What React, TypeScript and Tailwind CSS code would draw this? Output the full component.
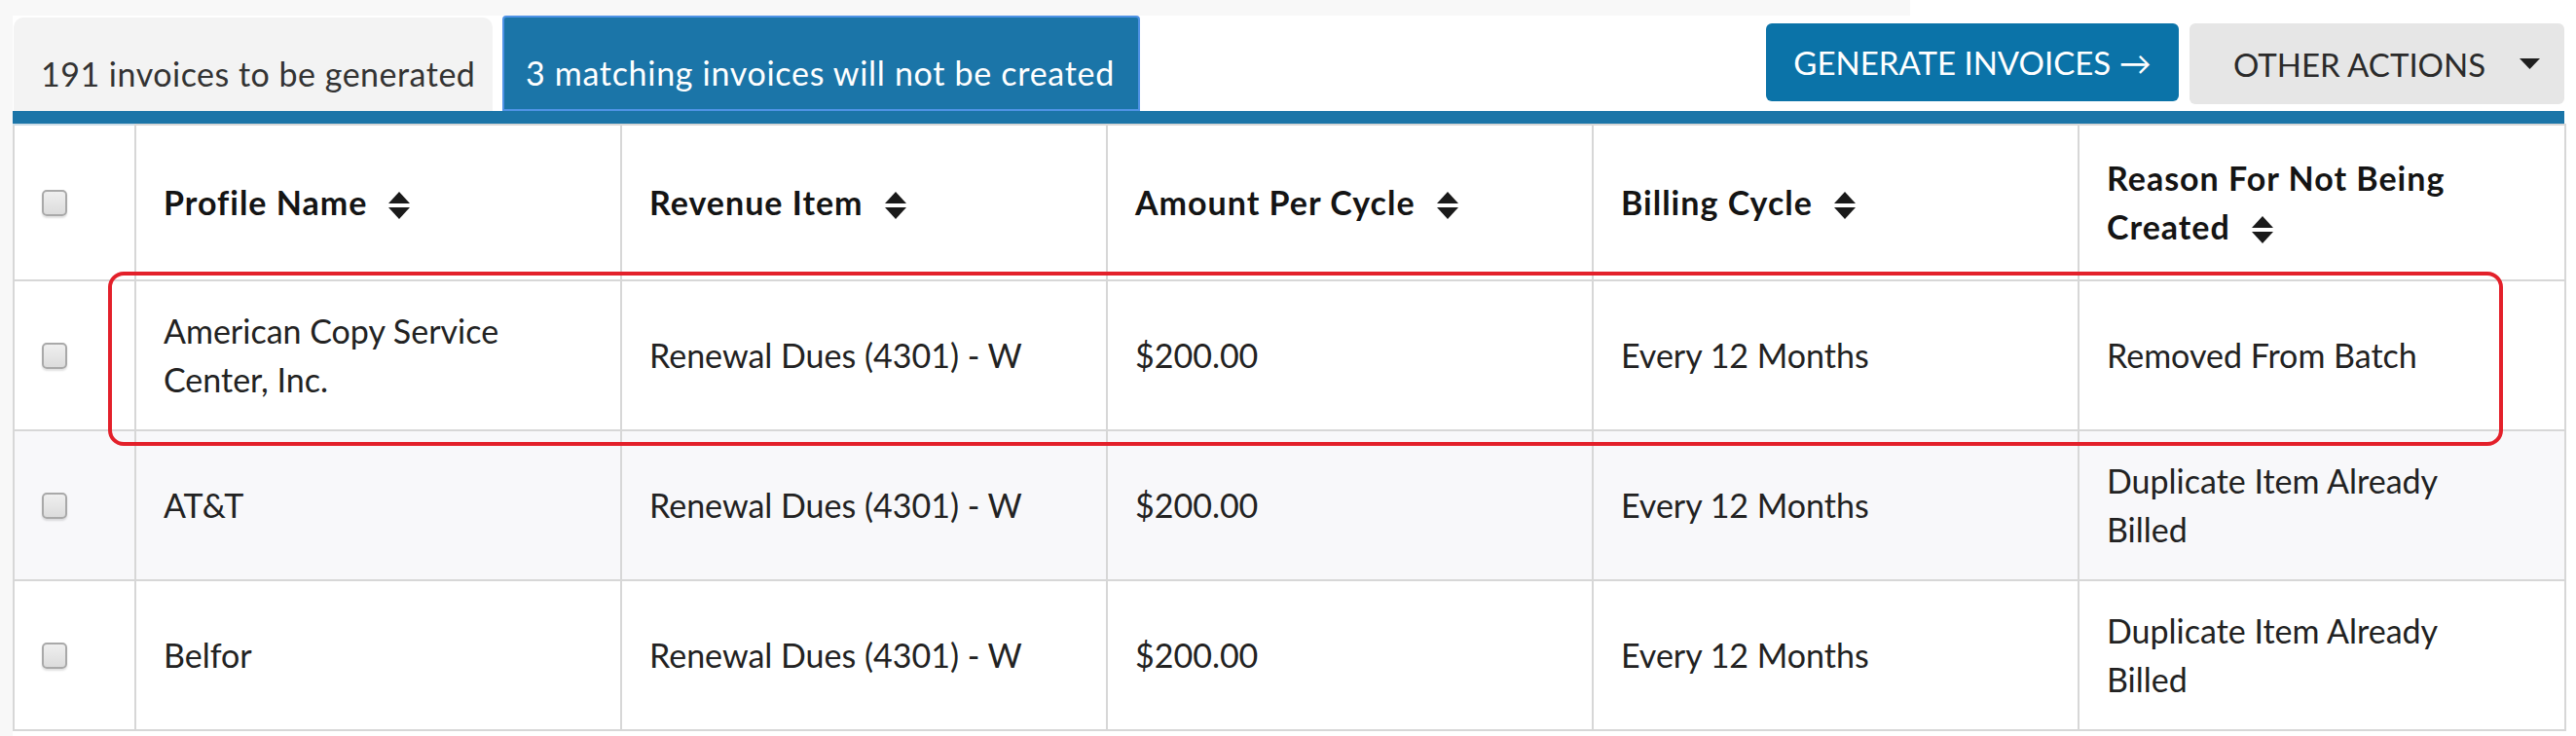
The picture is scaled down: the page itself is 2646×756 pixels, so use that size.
import React from "react";

type Row = {
  name: string;
  item: string;
  amount: string;
  cycle: string;
  reason: string;
  striped?: boolean;
};

const rows: Row[] = [
  {
    name: "American Copy Service Center, Inc.",
    item: "Renewal Dues (4301) - W",
    amount: "$200.00",
    cycle: "Every 12 Months",
    reason: "Removed From Batch",
  },
  {
    name: "AT&T",
    item: "Renewal Dues (4301) - W",
    amount: "$200.00",
    cycle: "Every 12 Months",
    reason: "Duplicate Item Already Billed",
    striped: true,
  },
  {
    name: "Belfor",
    item: "Renewal Dues (4301) - W",
    amount: "$200.00",
    cycle: "Every 12 Months",
    reason: "Duplicate Item Already Billed",
  },
];

function SortIcon() {
  return (
    <svg
      className="ml-[22px] inline-block h-[28px] w-[22px] align-[-4px]"
      viewBox="0 0 22 28"
      fill="#1a1a1a"
    >
      <polygon points="11,0 22,12 0,12" />
      <polygon points="0,16 22,16 11,28" />
    </svg>
  );
}

function Checkbox() {
  return (
    <span className="block h-[27px] w-[26px] rounded-[5px] border-2 border-[#a9a9a9] bg-gradient-to-b from-[#efefef] to-[#dcdcdc] shadow-[0_2px_2px_rgba(0,0,0,0.12)]" />
  );
}

function HeaderCell({ label, last }: { label: string; last?: boolean }) {
  return (
    <th
      className={
        last
          ? "border-2 border-[#d7d7d7] pl-[28px] pr-[40px] text-left align-middle font-bold tracking-[1px] text-[#141414]"
          : "border-2 border-[#d7d7d7] px-[28px] text-left align-middle font-bold tracking-[1px] text-[#141414]"
      }
    >
      {label}
      <SortIcon />
    </th>
  );
}

export default function App() {
  return (
    <div className="relative flex h-[756px] w-[2646px] bg-white font-['Lato','Open_Sans',sans-serif] text-[34px] leading-[50px] text-[#222]">
      <div className="w-[13px] shrink-0 bg-[#f8f8f8]" />

      <div className="flex w-[2621px] flex-col">
        {/* Tabs + actions */}
        <div className="h-[16px] w-[1949px] bg-[#f8f8f8]" />
        <div className="flex h-[98px] items-start justify-between">
          <div className="flex h-full items-end tracking-[0.5px]">
            <div className="ml-[1px] h-[96px] w-[492px] rounded-t-[10px] bg-[#f3f3f3] pl-[28px] pt-[33px] text-[#333]">
              191 invoices to be generated
            </div>
            <div className="ml-[10px] h-[98px] w-[655px] rounded-t-[4px] border-2 border-[#4f93e6] bg-[#1b75a8] pl-[22px] pt-[32px] tracking-[0.7px] text-white">
              3 matching invoices will not be created
            </div>
          </div>
          <div className="mt-[8px] flex gap-[11px]">
            <button className="flex h-[80px] w-[424px] items-center justify-center rounded-[6px] bg-[#0b73a8] text-[33px] text-white">
              GENERATE INVOICES →
            </button>
            <button className="flex h-[83px] w-[385px] items-center rounded-[6px] bg-[#e6e6e6] pl-[45px] text-[33px] text-[#2b2b2b]">
              OTHER ACTIONS
              <svg className="ml-[35px] h-[11px] w-[21px]" viewBox="0 0 21 11" fill="#1f1f1f">
                <polygon points="0,0 21,0 10.5,11" />
              </svg>
            </button>
          </div>
        </div>
        <div className="h-[13px] bg-[#1b75a8]" />

        {/* Table */}
        <table className="w-[2621px] table-fixed border-collapse">
          <colgroup>
            <col className="w-[125px]" />
            <col className="w-[499px]" />
            <col className="w-[499px]" />
            <col className="w-[499px]" />
            <col className="w-[499px]" />
            <col className="w-[500px]" />
          </colgroup>
          <thead>
            <tr className="h-[160px] bg-white">
              <th className="border-2 border-t-[#cddde7] border-[#d7d7d7] pl-[28px] align-middle">
                <Checkbox />
              </th>
              <HeaderCell label="Profile Name" />
              <HeaderCell label="Revenue Item" />
              <HeaderCell label="Amount Per Cycle" />
              <HeaderCell label="Billing Cycle" />
              <HeaderCell label="Reason For Not Being Created" last />
            </tr>
          </thead>
          <tbody>
            {rows.map((r) => (
              <tr
                key={r.name}
                className={r.striped ? "h-[154px] bg-[#f8f8fa]" : "h-[154px] bg-white"}
              >
                <td className="border-2 border-[#d7d7d7] pl-[28px] align-middle">
                  <Checkbox />
                </td>
                <td className="border-2 border-[#d7d7d7] px-[28px] align-middle">{r.name}</td>
                <td className="border-2 border-[#d7d7d7] px-[28px] align-middle">{r.item}</td>
                <td className="border-2 border-[#d7d7d7] px-[28px] align-middle">{r.amount}</td>
                <td className="border-2 border-[#d7d7d7] px-[28px] align-middle">{r.cycle}</td>
                <td className="border-2 border-[#d7d7d7] pl-[28px] pr-[60px] align-middle">
                  {r.reason}
                </td>
              </tr>
            ))}
          </tbody>
        </table>
      </div>

      {/* Red highlight annotation */}
      <div className="pointer-events-none absolute left-[111px] top-[279px] h-[179px] w-[2460px] rounded-[16px] border-4 border-[#e3202a]" />
    </div>
  );
}
